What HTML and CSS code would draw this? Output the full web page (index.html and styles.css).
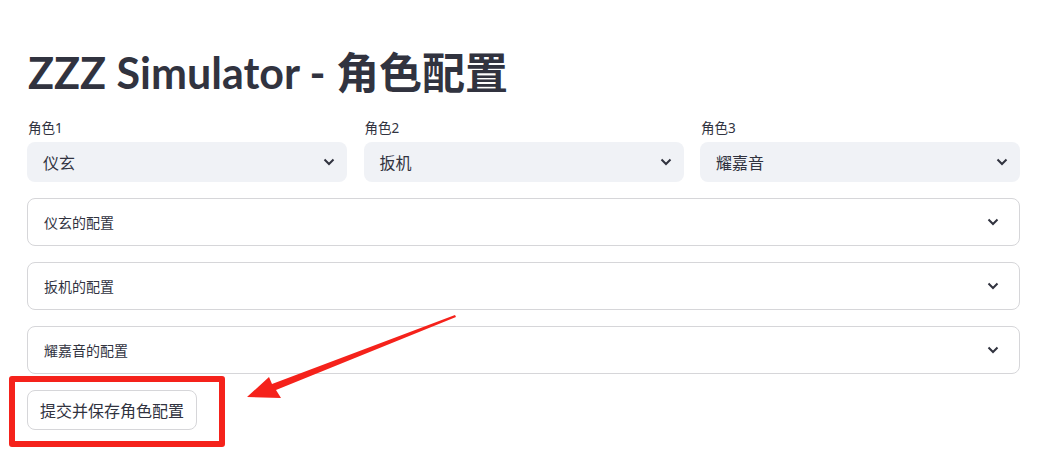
FILE: index.html
```html
<!DOCTYPE html>
<html lang="zh">
<head>
<meta charset="utf-8">
<link rel="stylesheet" href="styles.css">
</head>
<body>
<main class="page">
  <h1 class="title">ZZZ Simulator - 角色配置</h1>
  <div class="cols">
    <div class="col">
      <div class="label">角色1</div>
      <div class="select"><span>仪玄</span><svg class="chev" viewBox="0 0 12 8"><path d="M1.5 1.5 L6 6 L10.5 1.5" /></svg></div>
    </div>
    <div class="col">
      <div class="label">角色2</div>
      <div class="select"><span>扳机</span><svg class="chev" viewBox="0 0 12 8"><path d="M1.5 1.5 L6 6 L10.5 1.5" /></svg></div>
    </div>
    <div class="col">
      <div class="label">角色3</div>
      <div class="select"><span>耀嘉音</span><svg class="chev" viewBox="0 0 12 8"><path d="M1.5 1.5 L6 6 L10.5 1.5" /></svg></div>
    </div>
  </div>
  <div class="expander"><span>仪玄的配置</span><svg class="chev" viewBox="0 0 12 8"><path d="M1.5 1.5 L6 6 L10.5 1.5" /></svg></div>
  <div class="expander"><span>扳机的配置</span><svg class="chev" viewBox="0 0 12 8"><path d="M1.5 1.5 L6 6 L10.5 1.5" /></svg></div>
  <div class="expander"><span>耀嘉音的配置</span><svg class="chev" viewBox="0 0 12 8"><path d="M1.5 1.5 L6 6 L10.5 1.5" /></svg></div>
  <div class="btn-row">
    <button class="btn">提交并保存角色配置</button>
  </div>
</main>
<div class="mark-box"></div>
<svg class="mark-arrow" width="1061" height="473" viewBox="0 0 1061 473">
  <path d="M455 315 L456 317 L276 390 L281 398 L247 397 L269 377 L272 384 Z" fill="#f5221b"/>
</svg>
</body>
</html>
```

FILE: styles.css
```css
html, body {
  margin: 0;
  padding: 0;
  background: #ffffff;
}
body {
  font-family: "Noto Sans", "Noto Sans CJK SC", sans-serif;
  color: #31333f;
  width: 1061px;
  height: 473px;
  overflow: hidden;
  position: relative;
}
.page {
  padding: 45px 41px 0 27px;
  display: flex;
  flex-direction: column;
}
.title {
  margin: 0;
  font-family: "Lato", "Noto Sans CJK SC", sans-serif;
  font-weight: 700;
  font-size: 43px;
  line-height: 56px;
  color: #31333f;
  padding-left: 1px;
}
.cols {
  margin-top: 17px;
  display: grid;
  grid-template-columns: 320px 320px 320px;
  column-gap: 16.5px;
}
.label {
  font-size: 13.5px;
  line-height: 20px;
  margin-bottom: 4px;
  padding-left: 1px;
}
.select {
  height: 40px;
  background: #f0f2f6;
  border-radius: 8px;
  display: flex;
  align-items: center;
  justify-content: space-between;
  padding: 0 12px 0 16px;
  box-sizing: border-box;
  font-size: 16px;
}
.chev {
  width: 12px;
  height: 8px;
  fill: none;
  stroke: #31333f;
  stroke-width: 2;
}
.expander {
  margin-top: 16px;
  height: 48px;
  box-sizing: border-box;
  border: 1px solid #d6d6d9;
  border-radius: 8px;
  display: flex;
  align-items: center;
  justify-content: space-between;
  padding: 0 20px 0 16px;
  font-size: 14px;
}
.btn-row {
  margin-top: 16px;
  display: flex;
}
.btn {
  height: 40px;
  padding: 0 12px;
  background: #ffffff;
  border: 1px solid #d6d6d9;
  border-radius: 8px;
  font-family: "Noto Sans CJK SC", sans-serif;
  font-size: 16px;
  color: #31333f;
  width: 170px;
}
.mark-box {
  position: absolute;
  left: 9px;
  top: 376px;
  width: 204px;
  height: 59px;
  border: 6px solid #f5221b;
  border-radius: 3px;
}
.mark-arrow {
  position: absolute;
  left: 0;
  top: 0;
  pointer-events: none;
}
```
